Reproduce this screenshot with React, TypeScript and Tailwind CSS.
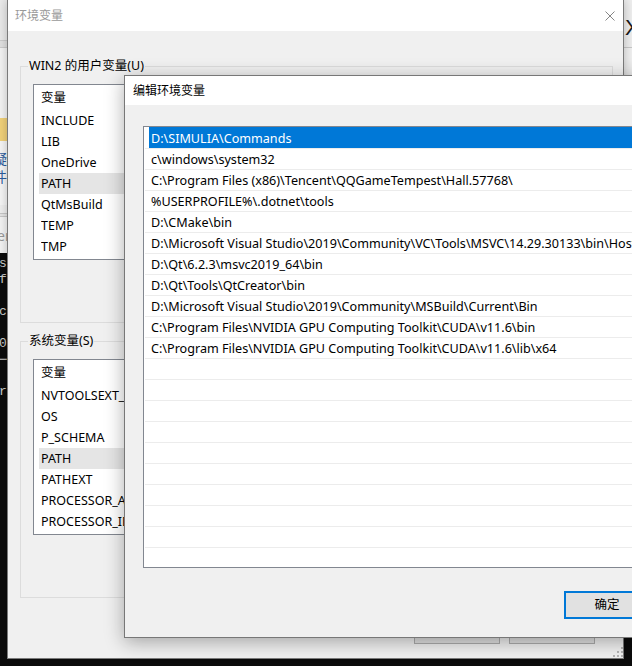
import React from "react";

const userVars = ["INCLUDE", "LIB", "OneDrive", "PATH", "QtMsBuild", "TEMP", "TMP"];
const sysVars = [
  "NVTOOLSEXT_PATH",
  "OS",
  "P_SCHEMA",
  "PATH",
  "PATHEXT",
  "PROCESSOR_ARCHITECTURE",
  "PROCESSOR_IDENTIFIER",
];

const pathEntries = [
  "D:\\SIMULIA\\Commands",
  "c\\windows\\system32",
  "C:\\Program Files (x86)\\Tencent\\QQGameTempest\\Hall.57768\\",
  "%USERPROFILE%\\.dotnet\\tools",
  "D:\\CMake\\bin",
  "D:\\Microsoft Visual Studio\\2019\\Community\\VC\\Tools\\MSVC\\14.29.30133\\bin\\Hostx64\\x64",
  "D:\\Qt\\6.2.3\\msvc2019_64\\bin",
  "D:\\Qt\\Tools\\QtCreator\\bin",
  "D:\\Microsoft Visual Studio\\2019\\Community\\MSBuild\\Current\\Bin",
  "C:\\Program Files\\NVIDIA GPU Computing Toolkit\\CUDA\\v11.6\\bin",
  "C:\\Program Files\\NVIDIA GPU Computing Toolkit\\CUDA\\v11.6\\lib\\x64",
];

// 21 visible rows in the path list, the rest are empty
const pathRows = [...pathEntries, ...Array.from({ length: 10 }, () => "")];

function WinButton({ label, primary = false, width = "w-[86px]" }: { label: string; primary?: boolean; width?: string }) {
  return (
    <div
      className={`flex items-center justify-center bg-[#e1e1e1] ${width} ${
        primary ? "h-[28px] border-2 border-[#0078d7]" : "h-[24px] border border-[#adadad]"
      }`}
    >
      {label}
    </div>
  );
}

function VarList({ items, selected }: { items: string[]; selected: number }) {
  return (
    <div className="h-[176px] overflow-hidden border border-[#828790] bg-white">
      <div className="flex h-[25px] items-center pl-[7px] pt-[2px]">
        <span>变量</span>
      </div>
      {items.map((name, i) => (
        <div key={name} className="h-[21px] pl-[5px]">
          <div className={`flex h-full items-center pl-[2px] pt-[2px] ${i === selected ? "bg-[#e5e5e5]" : ""}`}>
            <span className="w-[150px] overflow-hidden whitespace-nowrap">{name}</span>
          </div>
        </div>
      ))}
    </div>
  );
}

function VarGroup({ title, items, selected, className = "" }: { title: string; items: string[]; selected: number; className?: string }) {
  return (
    <fieldset className={`ml-[12px] mr-[10px] min-w-0 border border-[#dcdcdc] px-[12px] pb-[29px] ${className}`}>
      <legend className="ml-[-5px] px-[1px] leading-[16px]">{title}</legend>
      <div className="mt-[10px]">
        <VarList items={items} selected={selected} />
      </div>
      <div className="mt-[9px] flex justify-end gap-[8px]">
        <WinButton label="新建(N)..." width="w-[96px]" />
        <WinButton label="编辑(E)..." width="w-[96px]" />
        <WinButton label="删除(D)" width="w-[96px]" />
      </div>
    </fieldset>
  );
}

function SizeGrip() {
  return (
    <svg width="10" height="10" viewBox="0 0 10 10" className="absolute bottom-[1px] right-0">
      <g fill="#b4b4b4">
        <rect x="8" y="0" width="2" height="2" />
        <rect x="4" y="4" width="2" height="2" />
        <rect x="8" y="4" width="2" height="2" />
        <rect x="0" y="8" width="2" height="2" />
        <rect x="4" y="8" width="2" height="2" />
        <rect x="8" y="8" width="2" height="2" />
      </g>
    </svg>
  );
}

export default function App() {
  return (
    <div className="relative h-[666px] w-[632px] overflow-hidden bg-[#0c0c0c] font-['Noto_Sans','Noto_Sans_CJK_SC',sans-serif] text-[12.5px] text-black">
      {/* window behind, left edge */}
      <div className="absolute left-0 top-0 flex h-[253px] w-[40px] flex-col bg-[#f4f4f4]">
        <div className="h-[40px] bg-[#ebebeb]" />
        <div className="h-[8px] border-y border-[#cdcdcd] bg-[#e2e2e2]" />
        <div className="h-[70px] bg-[#f5f5f5]" />
        <div className="h-[23px] bg-[#f2d27a]" />
        <div className="flex h-[64px] flex-col bg-[#f7f7f7] pt-[9px] text-[14px] leading-[18px] text-[#2b5c9e]">
          <span className="ml-[-7px]">疑</span>
          <span className="ml-[-7px]">件</span>
        </div>
        <div className="h-[8px] bg-[#f0f0f0]" />
        <div className="h-[4px] border-y border-[#c8c8c8] bg-[#e6e6e6]" />
        <div className="flex h-[36px] items-center bg-[#f5f5f5] text-[14px] text-[#9a9a9a]">
          <span className="ml-[-3px]">er</span>
        </div>
      </div>

      {/* console behind, left edge */}
      <div className="absolute left-0 top-[256px] flex flex-col font-['Liberation_Mono',monospace] text-[13px] leading-[16px] text-[#cccccc]">
        <span className="ml-[-1px]">s</span>
        <span className="ml-[-1px]">f</span>
        <span className="ml-[-1px]">&nbsp;</span>
        <span className="ml-[-1px]">c</span>
        <span className="ml-[-1px]">&nbsp;</span>
        <span className="ml-[-1px]">0</span>
        <span className="ml-[-1px]">─</span>
        <span className="ml-[-1px]">&nbsp;</span>
        <span className="ml-[-1px]">r</span>
      </div>

      {/* window behind, right edge */}
      <div className="absolute left-[624px] top-0 h-[300px] w-[8px] bg-[#f0f0f0]">
        <div className="flex h-[48px] items-center border-b border-[#c8c8c8] bg-[#eeeeee] pl-[1px] pt-[8px] font-['Liberation_Sans',sans-serif] text-[22px] text-[#1a1a1a]">
          X
        </div>
      </div>

      {/* 环境变量 dialog */}
      <div className="absolute left-[7px] top-0 flex h-[659px] w-[617px] flex-col border-x border-b border-[#7a7a7a] bg-[#f0f0f0] shadow-[0_0_10px_rgba(0,0,0,0.25)]">
        <div className="flex h-[31px] shrink-0 items-center justify-between bg-white pl-[7px] pr-[8px]">
          <span className="text-[12px] text-[#999999]">环境变量</span>
          <svg width="10" height="10" viewBox="0 0 10 10">
            <path d="M0.5 0.5 L9.5 9.5 M9.5 0.5 L0.5 9.5" stroke="#858585" strokeWidth="1" fill="none" />
          </svg>
        </div>
        <div className="flex flex-col pt-[27px]">
          <VarGroup title="WIN2 的用户变量(U)" items={userVars} selected={3} />
          <VarGroup title="系统变量(S)" items={sysVars} selected={3} className="mt-[10px]" />
          <div className="mt-[22px] flex justify-end gap-[9px] pr-[28px]">
            <WinButton label="确定" />
            <WinButton label="取消" />
          </div>
        </div>
        <SizeGrip />
      </div>

      {/* 编辑环境变量 dialog */}
      <div className="absolute left-[124px] top-[75px] flex h-[563px] w-[640px] flex-col border border-[#777777] bg-[#f0f0f0] shadow-[0_4px_18px_rgba(0,0,0,0.32)]">
        <div className="flex h-[29px] shrink-0 items-center bg-white pl-[8px]">
          <span className="text-[12px]">编辑环境变量</span>
        </div>
        <div className="flex gap-[12px] pl-[18px] pt-[21px]">
          <div className="h-[442px] w-[500px] shrink-0 overflow-hidden border border-[#828790] bg-white">
            {pathRows.map((entry, i) => (
              <div
                key={i}
                className={`ml-[1px] border-b border-[#ececec] ${i === 0 ? "h-[22px]" : "h-[21px]"}`}
              >
                <div
                  className={`ml-[4px] flex h-full items-center whitespace-nowrap pl-[2px] pt-[3px] text-[12.6px] ${
                    i === 0 ? "bg-[#0078d7] text-white" : ""
                  }`}
                >
                  {entry}
                </div>
              </div>
            ))}
          </div>
          <div className="flex flex-col gap-[8px]">
            <WinButton label="新建(N)" width="w-[100px]" />
            <WinButton label="编辑(E)" width="w-[100px]" />
            <WinButton label="浏览(B)..." width="w-[100px]" />
            <WinButton label="删除(D)" width="w-[100px]" />
            <WinButton label="上移(U)" width="w-[100px]" />
            <WinButton label="下移(O)" width="w-[100px]" />
            <WinButton label="编辑文本(T)..." width="w-[100px]" />
          </div>
        </div>
        <div className="mt-[23px] flex justify-end gap-[8px] pr-[19px]">
          <WinButton label="确定" primary />
          <WinButton label="取消" />
        </div>
      </div>
    </div>
  );
}
